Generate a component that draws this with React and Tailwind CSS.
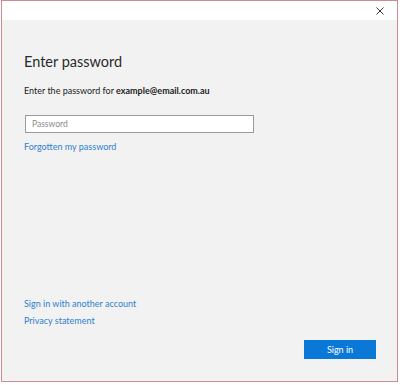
import React from "react";

export default function App() {
  return (
    <div className="w-[400px] h-[385px] bg-white relative" style={{ fontFamily: 'Lato, "Noto Sans", sans-serif' }}>
      <div className="ml-[1px] w-[397px] h-[382px] border border-[#cf8a92] flex flex-col bg-[#f2f2f2]">
        <div className="h-[19px] bg-white flex items-center justify-end pr-[13px] shrink-0">
          <svg width="8" height="8" viewBox="0 0 8 8" className="mt-[1px]">
            <path d="M0.5 0.5 L7.5 7.5 M7.5 0.5 L0.5 7.5" stroke="#333" strokeWidth="1" />
          </svg>
        </div>
        <div className="flex-1 flex flex-col pl-[22px] pr-[21px]">
          <h1 className="mt-[32px] text-[14.5px] font-normal text-[#2a2a2a] leading-[20px]">Enter password</h1>
          <p className="mt-[13px] text-[9px] text-[#222] leading-[12px]">
            Enter the password for <span className="font-bold">example@email.com.au</span>
          </p>
          <div className="mt-[18px] ml-[1px] w-[229px] h-[18px] border-[1.5px] border-[#9a9a9a] bg-white flex items-center pl-[6px]">
            <span className="text-[8.5px] text-[#8a8a8a]">Password</span>
          </div>
          <a className="mt-[7px] text-[9px] text-[#2f7fcf] leading-[14px]">Forgotten my password</a>
          <div className="flex-1" />
          <a className="text-[9px] text-[#2f7fcf] leading-[14px]">Sign in with another account</a>
          <a className="mt-[3px] text-[9px] text-[#2f7fcf] leading-[14px]">Privacy statement</a>
          <div className="flex justify-end mt-[12px] mb-[22px]">
            <button className="w-[72px] h-[19px] bg-[#0a78d6] text-white text-[9px] leading-none">Sign in</button>
          </div>
        </div>
      </div>
    </div>
  );
}
